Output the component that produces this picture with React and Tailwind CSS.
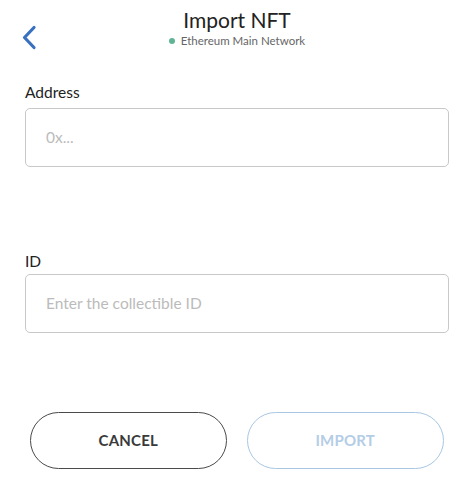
import React from 'react'

const App = () => {
    const font = { fontFamily: 'Lato, "Noto Sans", sans-serif' }

    return (
        <div className="w-[474px] h-[500px] bg-white flex flex-col" style={font}>
            {/* header */}
            <div className="relative h-[60px] flex flex-col items-center pt-[7px]">
                <button className="absolute left-[20px] top-[24px] w-[18px] h-[26px] flex items-center justify-center">
                    <svg width="16" height="25" viewBox="0 0 16 25" fill="none">
                        <path d="M13 2.5 L3.5 12.5 L13 22.5" stroke="#3a70c0" strokeWidth="3.2" strokeLinecap="round" strokeLinejoin="round" />
                    </svg>
                </button>
                <h1 className="text-[21px] leading-[26px] text-[#222]">Import NFT</h1>
                <div className="flex items-center gap-[6px] mt-[1px]">
                    <span className="w-[6px] h-[6px] rounded-full bg-[#5fb494]"></span>
                    <span className="text-[11.5px] leading-[14px] text-[#666]">Ethereum Main Network</span>
                </div>
            </div>

            {/* form */}
            <div className="px-[25px] flex flex-col">
                <label className="mt-[22px] text-[15.5px] leading-[20px] text-[#222]">Address</label>
                <div className="mt-[6px] h-[59px] border border-[#c8c8c8] rounded-[5px] flex items-center px-[20px]">
                    <span className="text-[15.5px] text-[#bbbbbb]">0x...</span>
                </div>

                <label className="mt-[84px] text-[15.5px] leading-[20px] text-[#222]">ID</label>
                <div className="mt-[3px] h-[59px] border border-[#c8c8c8] rounded-[5px] flex items-center px-[20px]">
                    <span className="text-[15.5px] text-[#bbbbbb]">Enter the collectible ID</span>
                </div>
            </div>

            {/* buttons */}
            <div className="mt-[79px] px-[30px] flex gap-[20px]">
                <button className="w-[197px] h-[57px] rounded-full border-[1.5px] border-[#4a4a4a] text-[15px] font-bold tracking-[0.2px] text-[#3a3a3a]">CANCEL</button>
                <button className="w-[198px] h-[57px] rounded-full border-[1.5px] border-[#a9c7e3] text-[15px] font-bold tracking-[0.2px] text-[#b4cde6]">IMPORT</button>
            </div>
        </div>
    )
}

export default App
